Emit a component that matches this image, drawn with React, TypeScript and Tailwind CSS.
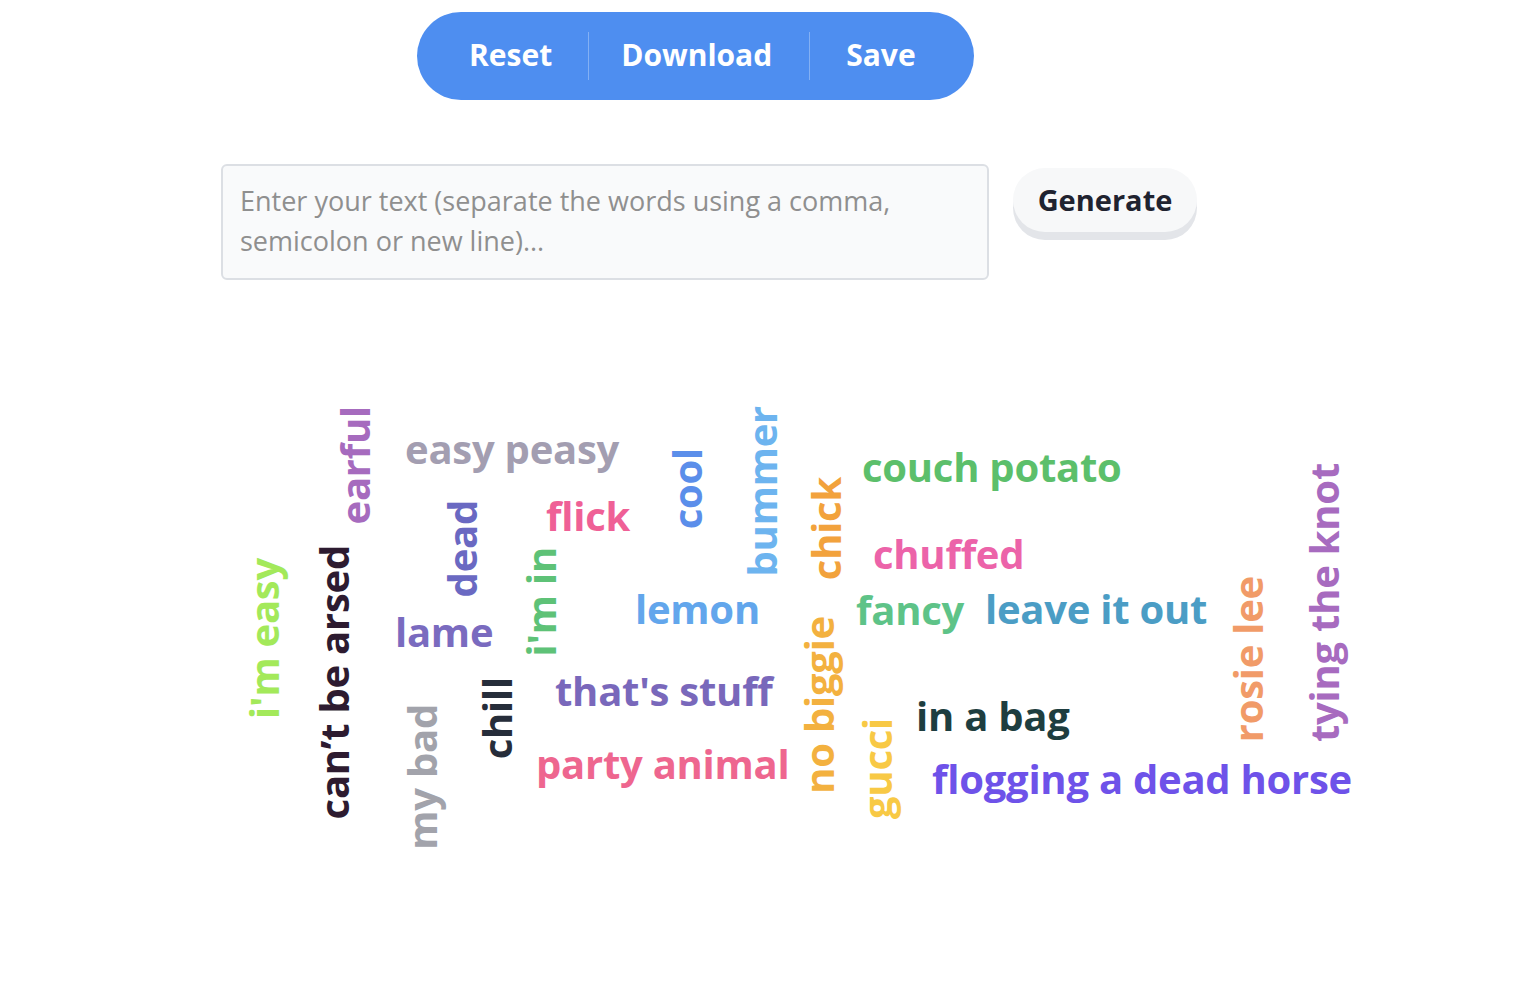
import React from 'react';

type Word = {
    text: string;
    color: string;
    // horizontal words: left/top, vertical words: left/bottom (inside the cloud box)
    pos: string;
    vertical?: boolean;
};

const words: Word[] = [
    { text: 'easy peasy', color: 'text-[#a39eb1]', pos: 'left-[405px] top-[149px]' },
    { text: 'flick', color: 'text-[#ef6096]', pos: 'left-[546px] top-[216px]' },
    { text: 'couch potato', color: 'text-[#5cbf6b]', pos: 'left-[862px] top-[167px]' },
    { text: 'chuffed', color: 'text-[#ec63a9]', pos: 'left-[873px] top-[254px]' },
    { text: 'lemon', color: 'text-[#62a6ec]', pos: 'left-[635px] top-[309px]' },
    { text: 'fancy', color: 'text-[#5ec388]', pos: 'left-[856px] top-[310px]' },
    { text: 'leave it out', color: 'text-[#4b9dc5]', pos: 'left-[985px] top-[309px]' },
    { text: 'lame', color: 'text-[#7a6bbf]', pos: 'left-[395px] top-[332px]' },
    { text: "that's stuff", color: 'text-[#7968bb]', pos: 'left-[555px] top-[391px]' },
    { text: 'party animal', color: 'text-[#ee668f]', pos: 'left-[536px] top-[464px]' },
    { text: 'in a bag', color: 'text-[#1e3e40]', pos: 'left-[916px] top-[416px]' },
    { text: 'flogging a dead horse', color: 'text-[#6e52e9]', pos: 'left-[932px] top-[479px]' },

    { text: 'earful', color: 'text-[#a66bbe]', pos: 'left-[335px] bottom-[356px]', vertical: true },
    { text: 'dead', color: 'text-[#6a69c2]', pos: 'left-[442px] bottom-[283px]', vertical: true },
    { text: 'cool', color: 'text-[#5b8eea]', pos: 'left-[667px] bottom-[351px]', vertical: true },
    { text: 'bummer', color: 'text-[#6db4ef]', pos: 'left-[742px] bottom-[304px]', vertical: true },
    { text: 'chick', color: 'text-[#f2a23c]', pos: 'left-[806px] bottom-[300px]', vertical: true },
    { text: "i'm easy", color: 'text-[#a3e95a]', pos: 'left-[244px] bottom-[161px]', vertical: true },
    { text: 'can’t be arsed', color: 'text-[#2d1b30]', pos: 'left-[314px] bottom-[61px]', vertical: true },
    { text: "i'm in", color: 'text-[#5ec277]', pos: 'left-[521px] bottom-[223px]', vertical: true },
    { text: 'my bad', color: 'text-[#a2a3ab]', pos: 'left-[402px] bottom-[30px]', vertical: true },
    { text: 'chill', color: 'text-[#262d3a]', pos: 'left-[477px] bottom-[121px]', vertical: true },
    { text: 'no biggie', color: 'text-[#f3b13f]', pos: 'left-[799px] bottom-[86px]', vertical: true },
    { text: 'gucci', color: 'text-[#f8c945]', pos: 'left-[857px] bottom-[61px]', vertical: true },
    { text: 'rosie lee', color: 'text-[#f19b68]', pos: 'left-[1228px] bottom-[138px]', vertical: true },
    { text: 'tying the knot', color: 'text-[#a76bbf]', pos: 'left-[1304px] bottom-[138px]', vertical: true },
];

function Toolbar() {
    return (
        <div className="ml-[417px] inline-flex h-[88px] items-center rounded-full bg-[#4e8ef0] pl-[16px] pr-[22px] pb-[4px] text-[30px] font-bold text-white">
            <button className="px-[36px]">Reset</button>
            <span className="mt-[4px] h-[48px] w-px bg-white/30" />
            <button className="pl-[32px] pr-[37px]">Download</button>
            <span className="mt-[4px] h-[48px] w-px bg-white/30" />
            <button className="px-[36px]">Save</button>
        </div>
    );
}

export default function App() {
    return (
        <div className="min-h-screen bg-white pt-[12px] font-['Open_Sans',sans-serif]">
            <Toolbar />

            {/* input row */}
            <div className="mt-[64px] ml-[221px] flex items-start gap-[24px]">
                <textarea
                    rows={2}
                    placeholder="Enter your text (separate the words using a comma, semicolon or new line)..."
                    className="h-[116px] w-[768px] resize-none rounded-[6px] border-2 border-[#dcdfe4] bg-[#f9fafb] px-[17px] pt-[15px] text-[27px] leading-[40px] text-[#333] outline-none placeholder:text-[#8f8f8f]"
                />
                <button className="mt-[4px] h-[64px] w-[184px] rounded-full bg-[#f7f8f9] text-[29px] font-bold text-[#1f2330] shadow-[0_8px_0_#e3e5e9]">
                    Generate
                </button>
            </div>

            {/* word cloud */}
            <div className="relative h-[600px] w-full">
                {words.map((w) => (
                    <span
                        key={w.text}
                        className={
                            w.vertical
                                ? `absolute ${w.pos} ${w.color} whitespace-nowrap text-[40px] font-bold leading-none tracking-[-0.25px] [writing-mode:vertical-rl] rotate-180`
                                : `absolute ${w.pos} ${w.color} whitespace-nowrap text-[40px] font-bold leading-none tracking-[-0.25px]`
                        }
                    >
                        {w.text}
                    </span>
                ))}
            </div>
        </div>
    );
}
